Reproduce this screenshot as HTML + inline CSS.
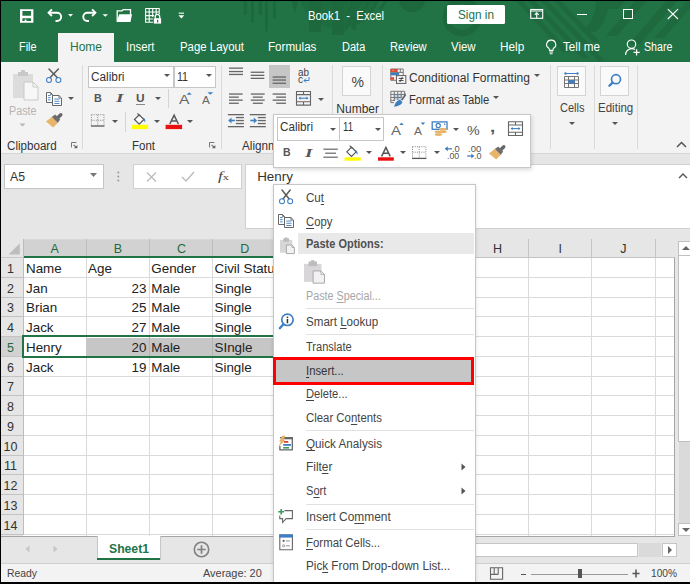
<!DOCTYPE html>
<html><head><meta charset="utf-8"><style>
html,body{margin:0;padding:0;}
body{width:690px;height:584px;overflow:hidden;position:relative;background:#fff;font-family:'Liberation Sans', sans-serif;}
body > div, body > svg, body > span {position:absolute;box-sizing:content-box;}

</style></head><body>
<div style="left:0px;top:0px;width:690px;height:584px;background:#e6e6e6;"></div>
<div style="left:0px;top:0px;width:690px;height:62px;background:#217346;"></div>
<svg style="left:1px;top:1px;" width="689" height="61" viewBox="1 1 689 61">
<g fill="#1e683e">
<rect x="243.7" y="0" width="3.1" height="14.8"/><rect x="251" y="0" width="3" height="22.6"/><rect x="258.5" y="0" width="3.5" height="14.8"/>
<rect x="265" y="0" width="3" height="31.3"/><rect x="273" y="0" width="3" height="19"/>
<path d="M291.5 0 H298.5 L295 13 Z"/>
<path d="M300 0 A 40 37 0 0 0 378 0 Z" opacity="0.55"/>
<rect x="309" y="0" width="12" height="32"/><rect x="332" y="0" width="11.7" height="35"/><rect x="351.5" y="0" width="5" height="30"/>
<path d="M345 0 h4 l-4 8z M352 0 h4 l-11 22 v-8z M360 0 h4 l-19 33 v-8z M368 0 h4 l-14 24 h-4z M376 0 h4 l-10 17 h-4z M384 0 h4 l-6 10 h-4z"/>
<path d="M399 0 A13 12 0 0 0 425 0 Z"/>
<path d="M462 -2.5 A19.5 19.5 0 1 0 462 36.5 A19.5 19.5 0 1 0 462 -2.5 Z M462 4 A13 13 0 1 1 462 30 A13 13 0 1 1 462 4 Z" fill-rule="evenodd"/>
<path d="M515 0 h7 l48 52 h-7z M527 0 h7 l55 58 h-7z M540 0 h7 l58 61 h-7z M553 0 h7 l40 42 h-7z" opacity="0.9"/>
<path d="M596 0 h14 Q606 24 596 32 h-14 Q596 20 596 0 Z" fill="#1e693e"/>
<path d="M636 0 h11 l-30 36 h-11z M667 0 h11 l-38 44 h-11z M688 0 h2 v8 l-26 30 h-10z" fill="#1e693e"/><path d="M612 0 h14 l-8 9 h-14z" fill="#1e693e"/>
</g></svg>
<svg style="left:18px;top:8px;" width="17" height="16" viewBox="18 8 17 16"><path d="M20 9.2 H33.4 V22.7 H20 Z M22.4 11 V15.7 H31.1 V11 Z M22.4 18.3 V21 H24.7 V19.6 H26.4 V21 H31.1 V18.3 Z" fill="#fff" fill-rule="evenodd"/></svg>
<svg style="left:45px;top:7px;" width="30" height="17" viewBox="45 7 30 17"><path d="M51.9 9.4 L48.6 12.7 L51.9 16" fill="none" stroke="#fff" stroke-width="1.9"/><path d="M49 12.7 H57 A4.15 4.15 0 0 1 57 21 H55.5" fill="none" stroke="#fff" stroke-width="1.9"/><path d="M68 14 H73 L70.5 16.7 Z" fill="#fff"/></svg>
<svg style="left:80px;top:7px;" width="30" height="17" viewBox="80 7 30 17"><path d="M92.1 9.4 L95.4 12.7 L92.1 16" fill="none" stroke="#fff" stroke-width="1.9"/><path d="M95 12.7 H87.4 A4.15 4.15 0 0 0 87.4 21 H89" fill="none" stroke="#fff" stroke-width="1.9"/><path d="M102.5 14.2 H108 L105.25 16.8 Z" fill="#fff"/></svg>
<svg style="left:115px;top:8px;" width="19" height="15" viewBox="115 8 19 15"><path d="M117.2 21.3 V10.8 H122 L123.2 9.6 H130.5 V14.5" fill="none" stroke="#fff" stroke-width="1.3"/><path d="M119.3 14.3 H132 L130.5 21.9 H116.5 Z" fill="#fff"/></svg>
<svg style="left:144px;top:7px;" width="19" height="18" viewBox="144 7 19 18"><g fill="none" stroke="#fff" stroke-width="1.1"><path d="M145.6 8.5 H159.2 V14 M145.6 8.5 V22.2 H153 M145.6 12 H159.2 M145.6 15.6 H154 M145.6 19 H153 M149.2 8.5 V22.2 M152.7 8.5 V17 M156.2 8.5 V14"/></g><rect x="153.8" y="18.2" width="7.3" height="5.4" fill="#fff"/><path d="M155.2 18.5 V16.6 A2.25 2.25 0 0 1 159.7 16.6 V18.5" fill="none" stroke="#fff" stroke-width="1.3"/><rect x="157" y="19.8" width="1.2" height="2.6" fill="#217346"/></svg>
<svg style="left:177px;top:11px;" width="8" height="9" viewBox="177 11 8 9"><rect x="178.7" y="12.6" width="5.3" height="1.1" fill="#fff"/><path d="M178.5 15.2 H184.2 L181.35 18.4 Z" fill="#fff"/></svg>
<span style="left:308.3px;top:10.42px;font-size:12.5px;line-height:12.5px;color:#fff;font-weight:400;white-space:nowrap;font-family:'Liberation Sans', sans-serif;transform:scaleX(0.904);transform-origin:0 0;">Book1&nbsp; -&nbsp; Excel</span>
<div style="left:446.5px;top:5px;width:58px;height:18.5px;background:#fff;border-radius:1.5px;"></div>
<span style="left:458px;top:8.92px;font-size:12.5px;line-height:12.5px;color:#217346;font-weight:400;white-space:nowrap;font-family:'Liberation Sans', sans-serif;transform:scaleX(0.942);transform-origin:0 0;">Sign in</span>
<svg style="left:529px;top:8px;" width="16" height="12" viewBox="529 8 16 12"><rect x="530.7" y="9.5" width="12" height="8.8" fill="none" stroke="#fff" stroke-width="1.1"/><path d="M530.7 11 H542.7" stroke="#fff" stroke-width="1"/><path d="M536.7 18.3 V12.8 M534.7 14.8 L536.7 12.8 L538.7 14.8" fill="none" stroke="#fff" stroke-width="1.1"/></svg>
<div style="left:577.4px;top:13.6px;width:9.8px;height:1.1px;background:#fff;"></div>
<div style="left:623px;top:9px;width:8px;height:8px;border:1.1px solid #fff;"></div>
<svg style="left:666px;top:8px;" width="14" height="12" viewBox="666 8 14 12"><path d="M667.8 9.2 L678 19 M678 9.2 L667.8 19" stroke="#fff" stroke-width="1.1"/></svg>
<div style="left:58px;top:32.5px;width:55.5px;height:30px;background:#f3f3f3;"></div>
<span style="left:18.5px;top:41.42px;font-size:12.5px;line-height:12.5px;color:#fff;font-weight:400;white-space:nowrap;font-family:'Liberation Sans', sans-serif;transform:scaleX(0.868);transform-origin:0 0;">File</span>
<span style="left:69.7px;top:41.42px;font-size:12.5px;line-height:12.5px;color:#217346;font-weight:400;white-space:nowrap;font-family:'Liberation Sans', sans-serif;transform:scaleX(0.960);transform-origin:0 0;">Home</span>
<span style="left:126px;top:41.22px;font-size:12.5px;line-height:12.5px;color:#fff;font-weight:400;white-space:nowrap;font-family:'Liberation Sans', sans-serif;transform:scaleX(0.912);transform-origin:0 0;">Insert</span>
<span style="left:180px;top:41.22px;font-size:12.5px;line-height:12.5px;color:#fff;font-weight:400;white-space:nowrap;font-family:'Liberation Sans', sans-serif;transform:scaleX(0.912);transform-origin:0 0;">Page Layout</span>
<span style="left:268.3px;top:41.22px;font-size:12.5px;line-height:12.5px;color:#fff;font-weight:400;white-space:nowrap;font-family:'Liberation Sans', sans-serif;transform:scaleX(0.929);transform-origin:0 0;">Formulas</span>
<span style="left:341.7px;top:41.22px;font-size:12.5px;line-height:12.5px;color:#fff;font-weight:400;white-space:nowrap;font-family:'Liberation Sans', sans-serif;transform:scaleX(0.882);transform-origin:0 0;">Data</span>
<span style="left:390px;top:41.22px;font-size:12.5px;line-height:12.5px;color:#fff;font-weight:400;white-space:nowrap;font-family:'Liberation Sans', sans-serif;transform:scaleX(0.895);transform-origin:0 0;">Review</span>
<span style="left:450.9px;top:41.22px;font-size:12.5px;line-height:12.5px;color:#fff;font-weight:400;white-space:nowrap;font-family:'Liberation Sans', sans-serif;transform:scaleX(0.915);transform-origin:0 0;">View</span>
<span style="left:499.8px;top:41.22px;font-size:12.5px;line-height:12.5px;color:#fff;font-weight:400;white-space:nowrap;font-family:'Liberation Sans', sans-serif;transform:scaleX(0.941);transform-origin:0 0;">Help</span>
<span style="left:563px;top:41.22px;font-size:12.5px;line-height:12.5px;color:#fff;font-weight:400;white-space:nowrap;font-family:'Liberation Sans', sans-serif;transform:scaleX(0.934);transform-origin:0 0;">Tell me</span>
<span style="left:643.6px;top:41.22px;font-size:12.5px;line-height:12.5px;color:#fff;font-weight:400;white-space:nowrap;font-family:'Liberation Sans', sans-serif;transform:scaleX(0.851);transform-origin:0 0;">Share</span>
<svg style="left:544px;top:37px;" width="14" height="19" viewBox="544 37 14 19"><path d="M551.2 40.1 a4.3 4.3 0 0 0 -2.6 7.9 c0.7 0.6 0.9 1.4 0.9 2.4 h3.4 c0 -1 0.2 -1.8 0.9 -2.4 a4.3 4.3 0 0 0 -2.6 -7.9 z" fill="none" stroke="#fff" stroke-width="1.1"/><path d="M549.3 52 h3.8 M549.8 53.8 h2.8" stroke="#fff" stroke-width="1.1"/></svg>
<svg style="left:623px;top:37px;" width="19" height="20" viewBox="623 37 19 20"><circle cx="631.5" cy="44.2" r="4.2" fill="none" stroke="#fff" stroke-width="1.2"/><path d="M625.6 55 a6.2 6.2 0 0 1 9.4 -5.4" fill="none" stroke="#fff" stroke-width="1.2"/><path d="M636.6 49.2 V55.4 M633.5 52.3 H639.7" stroke="#fff" stroke-width="1.2"/></svg>
<div style="left:1px;top:62px;width:689px;height:90.5px;background:#f3f3f3;"></div>
<div style="left:1px;top:152.8px;width:689px;height:1px;background:#d5d5d5;"></div>
<div style="left:82px;top:65px;width:1px;height:84px;background:#dadada;"></div>
<div style="left:220.5px;top:65px;width:1px;height:84px;background:#dadada;"></div>
<div style="left:332px;top:65px;width:1px;height:84px;background:#dadada;"></div>
<div style="left:382.4px;top:65px;width:1px;height:84px;background:#dadada;"></div>
<div style="left:550.4px;top:65px;width:1px;height:84px;background:#dadada;"></div>
<div style="left:593.6px;top:65px;width:1px;height:84px;background:#dadada;"></div>
<div style="left:637.2px;top:65px;width:1px;height:84px;background:#dadada;"></div>
<svg style="left:10px;top:69px;" width="30" height="32" viewBox="0 0 30 32"><path d="M3 5h20v24H3z" fill="#dcdcdc"/><path d="M8 3h10v4H8z" fill="#c8c8c8"/><rect x="11" y="1" width="4" height="3" rx="1" fill="#c8c8c8"/>
<path d="M14 13h9l5 5v13H14z" fill="#f7f7f7" stroke="#c9c9c9" stroke-width="1"/><path d="M23 13v5h5" fill="none" stroke="#c9c9c9"/></svg>
<span style="left:9.4px;top:104.92px;font-size:12.5px;line-height:12.5px;color:#b5b5b5;font-weight:400;white-space:nowrap;font-family:'Liberation Sans', sans-serif;transform:scaleX(0.860);transform-origin:0 0;">Paste</span>
<svg style="left:19px;top:123px;" width="7" height="4" viewBox="0 0 7 4"><path d="M0.5 0.5h6l-3 3z" fill="#b5b5b5"/></svg>
<svg style="left:45.2px;top:66.7px;" width="17.4" height="17" viewBox="45.2 66.7 17.4 17"><path d="M49.2 68.7 L57.4 77.2" stroke="#5a5a5a" stroke-width="1.5" stroke-linecap="round"/><path d="M58.6 68.7 L50.400000000000006 77.2" stroke="#5a5a5a" stroke-width="1.5" stroke-linecap="round"/><circle cx="49.2" cy="79.7" r="2.5" fill="none" stroke="#3f7fc1" stroke-width="1.05"/><circle cx="58.6" cy="79.7" r="2.5" fill="none" stroke="#3f7fc1" stroke-width="1.05"/></svg>
<svg style="left:45.3px;top:91px;" width="18" height="16" viewBox="45.3 91 18 16"><path d="M46.8 92.5 H50.8 L52.8 94.5 V102.5 H46.8 Z" fill="#fff" stroke="#666" stroke-width="1"/><path d="M50.8 92.5 V94.5 H52.8" fill="none" stroke="#666" stroke-width="0.8"/><rect x="48.3" y="95" width="2.6" height="0.9" fill="#3f7fc1"/><rect x="48.3" y="97.2" width="2.6" height="0.9" fill="#3f7fc1"/><rect x="48.3" y="99.4" width="2.6" height="0.9" fill="#3f7fc1"/><path d="M52.8 95.5 H59.199999999999996 L61.8 98.1 V105.5 H52.8 Z" fill="#fff" stroke="#666" stroke-width="1"/><path d="M59.199999999999996 95.5 V98.1 H61.8" fill="none" stroke="#666" stroke-width="0.8"/><rect x="54.599999999999994" y="98.6" width="5.2" height="0.9" fill="#3f7fc1"/><rect x="54.599999999999994" y="100.8" width="5.2" height="0.9" fill="#3f7fc1"/><rect x="54.599999999999994" y="103" width="5.2" height="0.9" fill="#3f7fc1"/></svg>
<svg style="left:68px;top:97px;" width="6" height="4" viewBox="0 0 6 4"><path d="M0 0h6l-3 3z" fill="#555"/></svg>
<svg style="left:44.3px;top:112px;" width="20" height="18" viewBox="44.3 112 20 18"><path d="M56.80 119.00 L61.10 114.70" stroke="#666" stroke-width="3.4" stroke-linecap="round"/><path d="M52.00 117.00 L55.50 114.50 L60.50 119.50 L58.00 123.00 Z" fill="#6e6e6e"/><path d="M46.30 121.50 L52.00 117.00 L58.00 123.00 L53.50 127.60 Z" fill="#e8b468"/></svg>
<span style="left:7.3px;top:140.24px;font-size:12px;line-height:12px;color:#333;font-weight:400;white-space:nowrap;font-family:'Liberation Sans', sans-serif;transform:scaleX(0.967);transform-origin:0 0;">Clipboard</span>
<svg style="left:70px;top:141.2px;" width="9" height="9" viewBox="70 141.2 9 9"><path d="M71.5 147.6 V142.7 H76.4" fill="none" stroke="#777" stroke-width="1"/><path d="M73.6 145.0 L76.5 147.79999999999998" stroke="#666" stroke-width="1.1"/><path d="M73.8 148.5 H77.4 V145.1 Z" fill="#666"/></svg>
<div style="left:87.5px;top:66px;width:84.5px;height:19.5px;border:1px solid #c6c6c6;background:#fff;"></div>
<div style="left:173.5px;top:66px;width:40px;height:19.5px;border:1px solid #c6c6c6;background:#fff;"></div>
<span style="left:90.5px;top:70.62px;font-size:12.5px;line-height:12.5px;color:#333;font-weight:400;white-space:nowrap;font-family:'Liberation Sans', sans-serif;transform:scaleX(0.945);transform-origin:0 0;">Calibri</span>
<svg style="left:164px;top:74px;" width="6" height="4" viewBox="0 0 6 4"><path d="M0 0h6l-3 3z" fill="#555"/></svg>
<span style="left:177px;top:70.62px;font-size:12.5px;line-height:12.5px;color:#333;font-weight:400;white-space:nowrap;font-family:'Liberation Sans', sans-serif;transform:scaleX(0.847);transform-origin:0 0;">11</span>
<svg style="left:206px;top:74px;" width="6" height="4" viewBox="0 0 6 4"><path d="M0 0h6l-3 3z" fill="#555"/></svg>
<span style="left:93.6px;top:93.07px;font-size:11.5px;line-height:11.5px;color:#555;font-weight:700;white-space:nowrap;font-family:'Liberation Sans', sans-serif;transform:scaleX(0.938);transform-origin:0 0;">B</span>
<span style="left:115.5px;top:92.22px;font-size:12.5px;line-height:12.5px;color:#555;font-weight:700;white-space:nowrap;font-family:'Liberation Serif', serif;font-style:italic;transform:scaleX(1.538);transform-origin:0 0;">I</span>
<span style="left:136px;top:93.07px;font-size:11.5px;line-height:11.5px;color:#555;font-weight:700;white-space:nowrap;font-family:'Liberation Sans', sans-serif;transform:scaleX(1.035);transform-origin:0 0;">U</span>
<div style="left:136px;top:104px;width:8.6px;height:1px;background:#888;"></div>
<svg style="left:155px;top:97px;" width="6" height="4" viewBox="0 0 6 4"><path d="M0 0h6l-3 3z" fill="#555"/></svg>
<div style="left:168px;top:89px;width:1px;height:19px;background:#d4d4d4;"></div>
<span style="left:178.6px;top:92.97px;font-size:13.5px;line-height:13.5px;color:#666;font-weight:400;white-space:nowrap;font-family:'Liberation Sans', sans-serif;transform:scaleX(1.154);transform-origin:0 0;">A</span>
<svg style="left:185px;top:91px;" width="8" height="5" viewBox="185 91 8 5"><path d="M186.6 94.7 H191.8 L189.2 92.2 Z" fill="#3f7fc1"/></svg>
<span style="left:201.5px;top:95.94px;font-size:10px;line-height:10px;color:#666;font-weight:400;white-space:nowrap;font-family:'Liberation Sans', sans-serif;transform:scaleX(1.169);transform-origin:0 0;">A</span>
<svg style="left:206px;top:91px;" width="8" height="5" viewBox="206 91 8 5"><path d="M207.4 92.2 H213.2 L210.3 94.7 Z" fill="#3f7fc1"/></svg>
<svg style="left:89px;top:112px;" width="17" height="16" viewBox="89 112 17 16"><path d="M91.4 114.7 H104 M91.4 120.3 H104 M91.4 114.7 V125.5 M97.7 114.7 V125.5 M104 114.7 V125.5" stroke="#8a8a8a" stroke-width="0.9" stroke-dasharray="1.1 1.1"/><path d="M90.9 126 H104.5" stroke="#555" stroke-width="1.3"/></svg>
<svg style="left:111.5px;top:120px;" width="6" height="4" viewBox="0 0 6 4"><path d="M0 0h6l-3 3z" fill="#555"/></svg>
<div style="left:124.7px;top:111.5px;width:1px;height:20px;background:#d4d4d4;"></div>
<svg style="left:131px;top:111px;" width="19" height="19" viewBox="131 111 19 19"><path d="M134.5 119.5 L139.2 114.8 L143.9 119.5 L139.2 124.2 Z" fill="#fff" stroke="#555" stroke-width="1.2"/><path d="M137.4 113.4 L140 116.2" stroke="#555" stroke-width="1.1"/><path d="M143.2 117.6 C145.3 118.6 145.8 120.8 145 122.5 C144 121 143.6 119.5 143.2 117.6 Z" fill="#3f7fc1"/><rect x="132" y="124.8" width="16.2" height="4.3" fill="#ffff00"/></svg>
<svg style="left:154px;top:120px;" width="6" height="4" viewBox="0 0 6 4"><path d="M0 0h6l-3 3z" fill="#555"/></svg>
<svg style="left:164px;top:111px;" width="20" height="19" viewBox="164 111 20 19"><path d="M169.8 124 L174.1 115.2 L178.4 124 M171.3 121 H176.9" fill="none" stroke="#555" stroke-width="1.5"/><rect x="165.6" y="124.8" width="16.5" height="4.3" fill="#e81010"/></svg>
<svg style="left:187px;top:120px;" width="6" height="4" viewBox="0 0 6 4"><path d="M0 0h6l-3 3z" fill="#555"/></svg>
<span style="left:131.5px;top:140.24px;font-size:12px;line-height:12px;color:#333;font-weight:400;white-space:nowrap;font-family:'Liberation Sans', sans-serif;transform:scaleX(0.958);transform-origin:0 0;">Font</span>
<svg style="left:208.4px;top:141.2px;" width="9" height="9" viewBox="208.4 141.2 9 9"><path d="M209.9 147.6 V142.7 H214.8" fill="none" stroke="#777" stroke-width="1"/><path d="M212.0 145.0 L214.9 147.79999999999998" stroke="#666" stroke-width="1.1"/><path d="M212.20000000000002 148.5 H215.8 V145.1 Z" fill="#666"/></svg>
<svg style="left:226px;top:65px;" width="64" height="22" viewBox="226 65 64 22"><rect x="229" y="67.5" width="14" height="1.3" fill="#666"/><rect x="229" y="70.9" width="14" height="1.3" fill="#666"/><rect x="229" y="73.8" width="14" height="1.3" fill="#666"/><rect x="250.7" y="71.6" width="13.6" height="1.3" fill="#666"/><rect x="250.7" y="74.7" width="13.6" height="1.3" fill="#666"/><rect x="250.7" y="77.7" width="13.6" height="1.3" fill="#666"/></svg>
<div style="left:268.5px;top:65px;width:21.5px;height:22.5px;background:#c6c6c6;"></div>
<svg style="left:270px;top:74px;" width="20" height="12" viewBox="270 74 20 12"><rect x="272.6" y="76.4" width="13.4" height="1.3" fill="#666"/><rect x="272.6" y="79.4" width="13.4" height="1.3" fill="#666"/><rect x="272.6" y="82.6" width="13.4" height="1.3" fill="#666"/></svg>
<span style="left:297.5px;top:66.69px;font-size:11px;line-height:11px;color:#444;font-weight:400;white-space:nowrap;font-family:'Liberation Sans', sans-serif;transform:scaleX(0.898);transform-origin:0 0;">ab</span>
<span style="left:297.5px;top:74.19px;font-size:11px;line-height:11px;color:#444;font-weight:400;white-space:nowrap;font-family:'Liberation Sans', sans-serif;transform:scaleX(0.909);transform-origin:0 0;">c</span>
<svg style="left:303px;top:77px;" width="7" height="6" viewBox="0 0 7 6"><path d="M6 0v3.5H1M3 1.5l-2 2 2 2" fill="none" stroke="#3c7fc4" stroke-width="1"/></svg>
<svg style="left:226px;top:90px;" width="64" height="16" viewBox="226 90 64 16"><rect x="229" y="93.4" width="13.7" height="1.3" fill="#666"/><rect x="229" y="96.5" width="9.8" height="1.3" fill="#666"/><rect x="229" y="99.5" width="13.7" height="1.3" fill="#666"/><rect x="229" y="102.6" width="9.8" height="1.3" fill="#666"/><rect x="250.8" y="93.4" width="13.9" height="1.3" fill="#666"/><rect x="252.8" y="96.5" width="10" height="1.3" fill="#666"/><rect x="250.8" y="99.5" width="13.9" height="1.3" fill="#666"/><rect x="252.8" y="102.6" width="10" height="1.3" fill="#666"/><rect x="272.6" y="93.4" width="13.4" height="1.3" fill="#666"/><rect x="276.2" y="96.5" width="9.8" height="1.3" fill="#666"/><rect x="272.6" y="99.5" width="13.4" height="1.3" fill="#666"/><rect x="276.2" y="102.6" width="9.8" height="1.3" fill="#666"/></svg>
<svg style="left:294px;top:89px;" width="19" height="19" viewBox="294 89 19 19"><path d="M296.5 91.5 H310.5 V105.1 H296.5 Z M296.5 94.6 H310.5 M296.5 101.7 H310.5 M303.5 91.5 V94.6 M303.5 101.7 V105.1" fill="none" stroke="#666" stroke-width="1.1"/><path d="M299.2 98.2 H307.8" stroke="#3f7fc1" stroke-width="1.1"/><path d="M298.6 98.2 L300.6 96.6 V99.8 Z M308.4 98.2 L306.4 96.6 V99.8 Z" fill="#3f7fc1"/></svg>
<svg style="left:318px;top:98px;" width="6" height="4" viewBox="0 0 6 4"><path d="M0 0h6l-3 3z" fill="#555"/></svg>
<svg style="left:226px;top:112px;" width="42" height="17" viewBox="226 112 42 17"><rect x="227.9" y="114" width="16" height="1.3" fill="#666"/><rect x="235.9" y="116.9" width="8" height="1.3" fill="#666"/><rect x="235.9" y="119.9" width="8" height="1.3" fill="#666"/><rect x="235.9" y="122.9" width="8" height="1.3" fill="#666"/><rect x="227.9" y="126" width="16" height="1.3" fill="#666"/><path d="M234.9 120.5 H229.9" stroke="#3f7fc1" stroke-width="1.6"/><path d="M228.20000000000002 120.5 L231.5 117.6 V123.4 Z" fill="#3f7fc1"/><rect x="249.8" y="114" width="16" height="1.3" fill="#666"/><rect x="257.8" y="116.9" width="8" height="1.3" fill="#666"/><rect x="257.8" y="119.9" width="8" height="1.3" fill="#666"/><rect x="257.8" y="122.9" width="8" height="1.3" fill="#666"/><rect x="249.8" y="126" width="16" height="1.3" fill="#666"/><path d="M250.3 120.5 H254.8" stroke="#3f7fc1" stroke-width="1.6"/><path d="M257.1 120.5 L253.8 117.6 V123.4 Z" fill="#3f7fc1"/></svg>
<span style="left:242.2px;top:140.24px;font-size:12px;line-height:12px;color:#333;font-weight:400;white-space:nowrap;font-family:'Liberation Sans', sans-serif;transform:scaleX(0.974);transform-origin:0 0;">Alignment</span>
<div style="left:341.5px;top:66px;width:27.5px;height:28px;border:1px solid #d4d4d4;background:#fafafa;"></div>
<span style="left:351.5px;top:75.15px;font-size:14px;line-height:14px;color:#444;font-weight:400;white-space:nowrap;font-family:'Liberation Sans', sans-serif;">%</span>
<span style="left:336.3px;top:102.54px;font-size:12px;line-height:12px;color:#333;font-weight:400;white-space:nowrap;font-family:'Liberation Sans', sans-serif;">Number</span>
<svg style="left:388px;top:67px;" width="20" height="18" viewBox="388 67 20 18"><path d="M390.8 69 H403.2 V75.5 M390.8 69 V80.3 H396 M390.8 72.4 H403.2 M397.2 69 V75 M400.3 69 V72.4" fill="none" stroke="#777" stroke-width="1"/><rect x="390.5" y="69" width="6.6" height="3" fill="#e04a3a"/><circle cx="393" cy="70.4" r="0.7" fill="#f0c040"/><rect x="390.5" y="72.8" width="8.6" height="2.5" fill="#3f7fc1"/><rect x="390.5" y="77.2" width="3.6" height="2.6" fill="#e04a3a"/><rect x="396.5" y="75.6" width="9.3" height="7.8" fill="#fff" stroke="#666" stroke-width="1.1"/><path d="M398.7 78.4 H403.6 M398.7 80.6 H403.6 M402.4 77 L399.8 82" stroke="#333" stroke-width="0.9"/></svg>
<span style="left:409.3px;top:72.42px;font-size:12.5px;line-height:12.5px;color:#333;font-weight:400;white-space:nowrap;font-family:'Liberation Sans', sans-serif;transform:scaleX(0.962);transform-origin:0 0;">Conditional Formatting</span>
<svg style="left:534px;top:74px;" width="6" height="4" viewBox="0 0 6 4"><path d="M0 0h6l-3 3z" fill="#555"/></svg>
<svg style="left:388px;top:90px;" width="20" height="18" viewBox="388 90 20 18"><rect x="393.5" y="94" width="9" height="6" fill="#bcd6ee"/><path d="M390.8 91.3 H404.6 V95 M390.8 91.3 V102.6 H394 M390.8 94.4 H404.6 M390.8 97.5 H401 M390.8 100.4 H395 M394.3 91.3 V101 M397.8 91.3 V100 M401.2 91.3 V98" fill="none" stroke="#777" stroke-width="1"/><path d="M405.5 93 L401 99.5 L402.3 100.8 L406 95.5 Z" fill="#666"/><path d="M400.5 100 C398 99.5 395.5 101.5 394 106.8 C398 106 401.5 105 402.4 102.2 Z" fill="#3f7fc1"/></svg>
<span style="left:409.3px;top:93.82px;font-size:12.5px;line-height:12.5px;color:#333;font-weight:400;white-space:nowrap;font-family:'Liberation Sans', sans-serif;transform:scaleX(0.898);transform-origin:0 0;">Format as Table</span>
<svg style="left:493px;top:96px;" width="6" height="4" viewBox="0 0 6 4"><path d="M0 0h6l-3 3z" fill="#555"/></svg>
<div style="left:557px;top:66px;width:27px;height:27.5px;border:1px solid #d4d4d4;background:#fafafa;"></div>
<svg style="left:563px;top:72px;" width="17" height="17" viewBox="0 0 17 17"><path d="M2.5 1.5h12" stroke="#3c7fc4" stroke-width="1"/><circle cx="2.5" cy="1.5" r="1.2" fill="#3c7fc4"/><circle cx="14.5" cy="1.5" r="1.2" fill="#3c7fc4"/><path d="M1.5 4.5h14v11h-14zM1.5 8h14M1.5 11.5h14M5.5 4.5v11M11.5 4.5v11" fill="none" stroke="#666" stroke-width="0.9"/><rect x="5.5" y="8" width="6" height="3.5" fill="#3c7fc4"/></svg>
<span style="left:560px;top:102.32px;font-size:12.5px;line-height:12.5px;color:#444;font-weight:400;white-space:nowrap;font-family:'Liberation Sans', sans-serif;transform:scaleX(0.881);transform-origin:0 0;">Cells</span>
<svg style="left:569px;top:122px;" width="6" height="4" viewBox="0 0 6 4"><path d="M0 0h6l-3 3z" fill="#555"/></svg>
<div style="left:600.3px;top:66px;width:27.2px;height:27.5px;border:1px solid #d4d4d4;background:#fafafa;"></div>
<svg style="left:606px;top:71px;" width="20" height="18" viewBox="606 71 20 18"><circle cx="616" cy="79.2" r="4.5" fill="none" stroke="#3f7fc1" stroke-width="1.7"/><path d="M612.6 82.6 L609.4 85.8" stroke="#3f7fc1" stroke-width="2.3" stroke-linecap="round"/></svg>
<span style="left:597.7px;top:102.32px;font-size:12.5px;line-height:12.5px;color:#444;font-weight:400;white-space:nowrap;font-family:'Liberation Sans', sans-serif;transform:scaleX(0.923);transform-origin:0 0;">Editing</span>
<svg style="left:611.5px;top:122px;" width="6" height="4" viewBox="0 0 6 4"><path d="M0 0h6l-3 3z" fill="#555"/></svg>
<svg style="left:676px;top:141px;" width="11" height="7" viewBox="0 0 11 7"><path d="M1 6l4.5-4.5L10 6" fill="none" stroke="#555" stroke-width="1.5"/></svg>
<div style="left:3.5px;top:164px;width:98px;height:23px;border:1px solid #c6c6c6;background:#fff;"></div>
<span style="left:10.4px;top:170.62px;font-size:12.5px;line-height:12.5px;color:#333;font-weight:400;white-space:nowrap;font-family:'Liberation Sans', sans-serif;transform:scaleX(0.981);transform-origin:0 0;">A5</span>
<svg style="left:90px;top:173px;" width="7" height="5" viewBox="0 0 7 5"><path d="M0 0h7l-3.5 4z" fill="#777"/></svg>
<svg style="left:115px;top:170px;" width="7" height="13" viewBox="115 170 7 13"><circle cx="118.3" cy="172.6" r="1" fill="#9a9a9a"/><circle cx="118.3" cy="176.6" r="1" fill="#9a9a9a"/><circle cx="118.3" cy="180.6" r="1" fill="#9a9a9a"/></svg>
<div style="left:133px;top:164px;width:106.5px;height:23px;border:1px solid #d0d0d0;background:#fff;"></div>
<svg style="left:146px;top:172px;" width="12" height="10" viewBox="0 0 12 10"><path d="M1 0.5l9 9M10 0.5l-9 9" stroke="#bbb" stroke-width="1.2"/></svg>
<svg style="left:181px;top:171px;" width="14" height="11" viewBox="0 0 14 11"><path d="M1 6l4 4L13 1" fill="none" stroke="#bbb" stroke-width="1.4"/></svg>
<span style="left:218px;top:170.42px;font-size:12.5px;line-height:12.5px;color:#444;font-weight:400;white-space:nowrap;font-family:'Liberation Serif', serif;transform:scaleX(1.378);transform-origin:0 0;"><i>f</i><span style="font-size:9px">x</span></span>
<div style="left:245px;top:164px;width:448px;height:62.5px;border:1px solid #d0d0d0;background:#fff;"></div>
<span style="left:257.2px;top:169.96px;font-size:13.4px;line-height:13.4px;color:#333;font-weight:400;white-space:nowrap;font-family:'Liberation Sans', sans-serif;">Henry</span>
<svg style="left:678px;top:172px;" width="10" height="7" viewBox="0 0 10 7"><path d="M1 6l4-4 4 4" fill="none" stroke="#555" stroke-width="1.4"/></svg>
<div style="left:1px;top:239px;width:674px;height:18.5px;background:#e6e6e6;"></div>
<div style="left:23px;top:239px;width:253px;height:17px;background:#d2d2d2;"></div>
<div style="left:23px;top:238.5px;width:253px;height:1px;background:#d8d8d8;"></div>
<svg style="left:7px;top:242px;" width="14" height="14" viewBox="7 242 14 14"><path d="M19.8 243.2 V254.5 H8.6 Z" fill="#bdbdbd"/></svg>
<div style="left:85.7px;top:239px;width:1px;height:18px;background:#bcbcbc;"></div>
<div style="left:148.9px;top:239px;width:1px;height:18px;background:#bcbcbc;"></div>
<div style="left:212.10000000000002px;top:239px;width:1px;height:18px;background:#bcbcbc;"></div>
<div style="left:275.3px;top:239px;width:1px;height:18px;background:#bcbcbc;"></div>
<div style="left:338.5px;top:239px;width:1px;height:18px;background:#c4c4c4;"></div>
<div style="left:401.70000000000005px;top:239px;width:1px;height:18px;background:#c4c4c4;"></div>
<div style="left:464.90000000000003px;top:239px;width:1px;height:18px;background:#c4c4c4;"></div>
<div style="left:528.1px;top:239px;width:1px;height:18px;background:#c4c4c4;"></div>
<div style="left:591.3000000000001px;top:239px;width:1px;height:18px;background:#c4c4c4;"></div>
<div style="left:654.5px;top:239px;width:1px;height:18px;background:#c4c4c4;"></div>
<div style="left:23px;top:256px;width:253px;height:2px;background:#217346;"></div>
<span style="left:50.6px;top:242.92px;font-size:12.5px;line-height:12.5px;color:#1e6b3e;font-weight:400;white-space:nowrap;font-family:'Liberation Sans', sans-serif;width:8px;text-align:center;">A</span>
<span style="left:113.80000000000001px;top:242.92px;font-size:12.5px;line-height:12.5px;color:#1e6b3e;font-weight:400;white-space:nowrap;font-family:'Liberation Sans', sans-serif;width:8px;text-align:center;">B</span>
<span style="left:177.0px;top:242.92px;font-size:12.5px;line-height:12.5px;color:#1e6b3e;font-weight:400;white-space:nowrap;font-family:'Liberation Sans', sans-serif;width:8px;text-align:center;">C</span>
<span style="left:240.20000000000002px;top:242.92px;font-size:12.5px;line-height:12.5px;color:#1e6b3e;font-weight:400;white-space:nowrap;font-family:'Liberation Sans', sans-serif;width:8px;text-align:center;">D</span>
<span style="left:303.40000000000003px;top:242.92px;font-size:12.5px;line-height:12.5px;color:#333;font-weight:400;white-space:nowrap;font-family:'Liberation Sans', sans-serif;width:8px;text-align:center;">E</span>
<span style="left:366.6px;top:242.92px;font-size:12.5px;line-height:12.5px;color:#333;font-weight:400;white-space:nowrap;font-family:'Liberation Sans', sans-serif;width:8px;text-align:center;">F</span>
<span style="left:429.80000000000007px;top:242.92px;font-size:12.5px;line-height:12.5px;color:#333;font-weight:400;white-space:nowrap;font-family:'Liberation Sans', sans-serif;width:8px;text-align:center;">G</span>
<span style="left:493.00000000000006px;top:242.92px;font-size:12.5px;line-height:12.5px;color:#333;font-weight:400;white-space:nowrap;font-family:'Liberation Sans', sans-serif;width:8px;text-align:center;">H</span>
<span style="left:556.2px;top:242.92px;font-size:12.5px;line-height:12.5px;color:#333;font-weight:400;white-space:nowrap;font-family:'Liberation Sans', sans-serif;width:8px;text-align:center;">I</span>
<span style="left:619.4000000000001px;top:242.92px;font-size:12.5px;line-height:12.5px;color:#333;font-weight:400;white-space:nowrap;font-family:'Liberation Sans', sans-serif;width:8px;text-align:center;">J</span>
<div style="left:23px;top:257.5px;width:651.5px;height:278px;background:#fff;"></div>
<div style="left:1px;top:257.5px;width:22px;height:278px;background:#e6e6e6;"></div>
<div style="left:1px;top:336.5px;width:22px;height:19.75px;background:#d2d2d2;"></div>
<div style="left:23px;top:276.75px;width:651.5px;height:1px;background:#dadada;"></div>
<div style="left:1px;top:276.75px;width:22px;height:1px;background:#c3c3c3;"></div>
<div style="left:23px;top:296.5px;width:651.5px;height:1px;background:#dadada;"></div>
<div style="left:1px;top:296.5px;width:22px;height:1px;background:#c3c3c3;"></div>
<div style="left:23px;top:316.25px;width:651.5px;height:1px;background:#dadada;"></div>
<div style="left:1px;top:316.25px;width:22px;height:1px;background:#c3c3c3;"></div>
<div style="left:23px;top:336.0px;width:651.5px;height:1px;background:#dadada;"></div>
<div style="left:1px;top:336.0px;width:22px;height:1px;background:#c3c3c3;"></div>
<div style="left:23px;top:355.75px;width:651.5px;height:1px;background:#dadada;"></div>
<div style="left:1px;top:355.75px;width:22px;height:1px;background:#c3c3c3;"></div>
<div style="left:23px;top:375.5px;width:651.5px;height:1px;background:#dadada;"></div>
<div style="left:1px;top:375.5px;width:22px;height:1px;background:#c3c3c3;"></div>
<div style="left:23px;top:395.25px;width:651.5px;height:1px;background:#dadada;"></div>
<div style="left:1px;top:395.25px;width:22px;height:1px;background:#c3c3c3;"></div>
<div style="left:23px;top:415.0px;width:651.5px;height:1px;background:#dadada;"></div>
<div style="left:1px;top:415.0px;width:22px;height:1px;background:#c3c3c3;"></div>
<div style="left:23px;top:434.75px;width:651.5px;height:1px;background:#dadada;"></div>
<div style="left:1px;top:434.75px;width:22px;height:1px;background:#c3c3c3;"></div>
<div style="left:23px;top:454.5px;width:651.5px;height:1px;background:#dadada;"></div>
<div style="left:1px;top:454.5px;width:22px;height:1px;background:#c3c3c3;"></div>
<div style="left:23px;top:474.25px;width:651.5px;height:1px;background:#dadada;"></div>
<div style="left:1px;top:474.25px;width:22px;height:1px;background:#c3c3c3;"></div>
<div style="left:23px;top:494.0px;width:651.5px;height:1px;background:#dadada;"></div>
<div style="left:1px;top:494.0px;width:22px;height:1px;background:#c3c3c3;"></div>
<div style="left:23px;top:513.75px;width:651.5px;height:1px;background:#dadada;"></div>
<div style="left:1px;top:513.75px;width:22px;height:1px;background:#c3c3c3;"></div>
<div style="left:23px;top:533.5px;width:651.5px;height:1px;background:#dadada;"></div>
<div style="left:1px;top:533.5px;width:22px;height:1px;background:#c3c3c3;"></div>
<div style="left:85.7px;top:257.5px;width:1px;height:278px;background:#dadada;"></div>
<div style="left:148.9px;top:257.5px;width:1px;height:278px;background:#dadada;"></div>
<div style="left:212.10000000000002px;top:257.5px;width:1px;height:278px;background:#dadada;"></div>
<div style="left:275.3px;top:257.5px;width:1px;height:278px;background:#dadada;"></div>
<div style="left:338.5px;top:257.5px;width:1px;height:278px;background:#dadada;"></div>
<div style="left:401.70000000000005px;top:257.5px;width:1px;height:278px;background:#dadada;"></div>
<div style="left:464.90000000000003px;top:257.5px;width:1px;height:278px;background:#dadada;"></div>
<div style="left:528.1px;top:257.5px;width:1px;height:278px;background:#dadada;"></div>
<div style="left:591.3000000000001px;top:257.5px;width:1px;height:278px;background:#dadada;"></div>
<div style="left:654.5px;top:257.5px;width:1px;height:278px;background:#dadada;"></div>
<div style="left:22.5px;top:239px;width:1px;height:296px;background:#bcbcbc;"></div>
<div style="left:276px;top:256.6px;width:398.5px;height:1.2px;background:#c3c3c3;"></div>
<div style="left:1px;top:257.2px;width:22px;height:1.2px;background:#c8c8c8;"></div>
<div style="left:674.3px;top:257.5px;width:1px;height:279px;background:#a5a5a5;"></div>
<div style="left:1px;top:536px;width:674.3px;height:1px;background:#a5a5a5;"></div>
<span style="left:0px;top:262.92px;font-size:12.5px;line-height:12.5px;color:#333;font-weight:400;white-space:nowrap;font-family:'Liberation Sans', sans-serif;width:21px;text-align:center;">1</span>
<span style="left:0px;top:282.67px;font-size:12.5px;line-height:12.5px;color:#333;font-weight:400;white-space:nowrap;font-family:'Liberation Sans', sans-serif;width:21px;text-align:center;">2</span>
<span style="left:0px;top:302.42px;font-size:12.5px;line-height:12.5px;color:#333;font-weight:400;white-space:nowrap;font-family:'Liberation Sans', sans-serif;width:21px;text-align:center;">3</span>
<span style="left:0px;top:322.17px;font-size:12.5px;line-height:12.5px;color:#333;font-weight:400;white-space:nowrap;font-family:'Liberation Sans', sans-serif;width:21px;text-align:center;">4</span>
<span style="left:0px;top:341.92px;font-size:12.5px;line-height:12.5px;color:#1e6b3e;font-weight:400;white-space:nowrap;font-family:'Liberation Sans', sans-serif;width:21px;text-align:center;">5</span>
<span style="left:0px;top:361.67px;font-size:12.5px;line-height:12.5px;color:#333;font-weight:400;white-space:nowrap;font-family:'Liberation Sans', sans-serif;width:21px;text-align:center;">6</span>
<span style="left:0px;top:381.42px;font-size:12.5px;line-height:12.5px;color:#333;font-weight:400;white-space:nowrap;font-family:'Liberation Sans', sans-serif;width:21px;text-align:center;">7</span>
<span style="left:0px;top:401.17px;font-size:12.5px;line-height:12.5px;color:#333;font-weight:400;white-space:nowrap;font-family:'Liberation Sans', sans-serif;width:21px;text-align:center;">8</span>
<span style="left:0px;top:420.92px;font-size:12.5px;line-height:12.5px;color:#333;font-weight:400;white-space:nowrap;font-family:'Liberation Sans', sans-serif;width:21px;text-align:center;">9</span>
<span style="left:0px;top:440.67px;font-size:12.5px;line-height:12.5px;color:#333;font-weight:400;white-space:nowrap;font-family:'Liberation Sans', sans-serif;width:21px;text-align:center;">10</span>
<span style="left:0px;top:460.42px;font-size:12.5px;line-height:12.5px;color:#333;font-weight:400;white-space:nowrap;font-family:'Liberation Sans', sans-serif;width:21px;text-align:center;">11</span>
<span style="left:0px;top:480.17px;font-size:12.5px;line-height:12.5px;color:#333;font-weight:400;white-space:nowrap;font-family:'Liberation Sans', sans-serif;width:21px;text-align:center;">12</span>
<span style="left:0px;top:499.92px;font-size:12.5px;line-height:12.5px;color:#333;font-weight:400;white-space:nowrap;font-family:'Liberation Sans', sans-serif;width:21px;text-align:center;">13</span>
<span style="left:0px;top:519.67px;font-size:12.5px;line-height:12.5px;color:#333;font-weight:400;white-space:nowrap;font-family:'Liberation Sans', sans-serif;width:21px;text-align:center;">14</span>
<div style="left:86.2px;top:337.5px;width:200px;height:19px;background:#c6c6c6;"></div>
<div style="left:21.8px;top:335.0px;width:298px;height:20.5px;border:1px solid #217346;background:none;border-width:2px;width:296px;height:18.5px;"></div>
<div style="left:23.8px;top:337.0px;width:61.900000000000006px;height:18.5px;background:#fff;"></div>
<div style="left:148.9px;top:337.0px;width:1px;height:19px;background:#b4b4b4;"></div>
<div style="left:212.10000000000002px;top:337.0px;width:1px;height:19px;background:#b4b4b4;"></div>
<div style="left:275.3px;top:337.0px;width:1px;height:19px;background:#b4b4b4;"></div>
<span style="left:26.0px;top:261.96px;font-size:13.4px;line-height:13.4px;color:#222;font-weight:400;white-space:nowrap;font-family:'Liberation Sans', sans-serif;">Name</span>
<span style="left:88.10000000000001px;top:261.96px;font-size:13.4px;line-height:13.4px;color:#222;font-weight:400;white-space:nowrap;font-family:'Liberation Sans', sans-serif;">Age</span>
<span style="left:151.3px;top:261.96px;font-size:13.4px;line-height:13.4px;color:#222;font-weight:400;white-space:nowrap;font-family:'Liberation Sans', sans-serif;">Gender</span>
<span style="left:214.50000000000003px;top:261.96px;font-size:13.4px;line-height:13.4px;color:#222;font-weight:400;white-space:nowrap;font-family:'Liberation Sans', sans-serif;">Civil Status</span>
<span style="left:26.0px;top:281.71px;font-size:13.4px;line-height:13.4px;color:#222;font-weight:400;white-space:nowrap;font-family:'Liberation Sans', sans-serif;">Jan</span>
<span style="left:86.2px;top:281.71px;width:60.2px;text-align:right;font-size:13.4px;line-height:13.4px;color:#222;white-space:nowrap;">23</span>
<span style="left:151.3px;top:281.71px;font-size:13.4px;line-height:13.4px;color:#222;font-weight:400;white-space:nowrap;font-family:'Liberation Sans', sans-serif;">Male</span>
<span style="left:214.50000000000003px;top:281.71px;font-size:13.4px;line-height:13.4px;color:#222;font-weight:400;white-space:nowrap;font-family:'Liberation Sans', sans-serif;">Single</span>
<span style="left:26.0px;top:301.46px;font-size:13.4px;line-height:13.4px;color:#222;font-weight:400;white-space:nowrap;font-family:'Liberation Sans', sans-serif;">Brian</span>
<span style="left:86.2px;top:301.46px;width:60.2px;text-align:right;font-size:13.4px;line-height:13.4px;color:#222;white-space:nowrap;">25</span>
<span style="left:151.3px;top:301.46px;font-size:13.4px;line-height:13.4px;color:#222;font-weight:400;white-space:nowrap;font-family:'Liberation Sans', sans-serif;">Male</span>
<span style="left:214.50000000000003px;top:301.46px;font-size:13.4px;line-height:13.4px;color:#222;font-weight:400;white-space:nowrap;font-family:'Liberation Sans', sans-serif;">Single</span>
<span style="left:26.0px;top:321.21px;font-size:13.4px;line-height:13.4px;color:#222;font-weight:400;white-space:nowrap;font-family:'Liberation Sans', sans-serif;">Jack</span>
<span style="left:86.2px;top:321.21px;width:60.2px;text-align:right;font-size:13.4px;line-height:13.4px;color:#222;white-space:nowrap;">27</span>
<span style="left:151.3px;top:321.21px;font-size:13.4px;line-height:13.4px;color:#222;font-weight:400;white-space:nowrap;font-family:'Liberation Sans', sans-serif;">Male</span>
<span style="left:214.50000000000003px;top:321.21px;font-size:13.4px;line-height:13.4px;color:#222;font-weight:400;white-space:nowrap;font-family:'Liberation Sans', sans-serif;">Single</span>
<span style="left:26.0px;top:340.96px;font-size:13.4px;line-height:13.4px;color:#222;font-weight:400;white-space:nowrap;font-family:'Liberation Sans', sans-serif;">Henry</span>
<span style="left:86.2px;top:340.96px;width:60.2px;text-align:right;font-size:13.4px;line-height:13.4px;color:#222;white-space:nowrap;">20</span>
<span style="left:151.3px;top:340.96px;font-size:13.4px;line-height:13.4px;color:#222;font-weight:400;white-space:nowrap;font-family:'Liberation Sans', sans-serif;">Male</span>
<span style="left:214.50000000000003px;top:340.96px;font-size:13.4px;line-height:13.4px;color:#222;font-weight:400;white-space:nowrap;font-family:'Liberation Sans', sans-serif;">SIngle</span>
<span style="left:26.0px;top:360.71px;font-size:13.4px;line-height:13.4px;color:#222;font-weight:400;white-space:nowrap;font-family:'Liberation Sans', sans-serif;">Jack</span>
<span style="left:86.2px;top:360.71px;width:60.2px;text-align:right;font-size:13.4px;line-height:13.4px;color:#222;white-space:nowrap;">19</span>
<span style="left:151.3px;top:360.71px;font-size:13.4px;line-height:13.4px;color:#222;font-weight:400;white-space:nowrap;font-family:'Liberation Sans', sans-serif;">Male</span>
<span style="left:214.50000000000003px;top:360.71px;font-size:13.4px;line-height:13.4px;color:#222;font-weight:400;white-space:nowrap;font-family:'Liberation Sans', sans-serif;">Single</span>
<div style="left:675.5px;top:239px;width:15px;height:297px;background:#e6e6e6;"></div>
<div style="left:678.5px;top:256px;width:12px;height:267px;background:#dadada;"></div>
<div style="left:678px;top:241px;width:12px;height:13px;border:1px solid #c0c0c0;background:#fff;"></div>
<svg style="left:682px;top:245px;" width="8" height="6" viewBox="0 0 8 6"><path d="M0 5h8L4 1z" fill="#666"/></svg>
<div style="left:678px;top:255px;width:12px;height:185px;border:1px solid #c0c0c0;background:#fff;"></div>
<div style="left:678.3px;top:522.7px;width:12px;height:11.5px;border:1px solid #c0c0c0;background:#fff;"></div>
<svg style="left:682px;top:527px;" width="8" height="6" viewBox="0 0 8 6"><path d="M0 1h8L4 5z" fill="#666"/></svg>
<div style="left:1px;top:537px;width:689px;height:26px;background:#e6e6e6;"></div>
<svg style="left:25px;top:545px;" width="5" height="8" viewBox="0 0 5 8"><path d="M4.5 0.5v7L0.5 4z" fill="#c6c6c6"/></svg>
<svg style="left:53px;top:545px;" width="5" height="8" viewBox="0 0 5 8"><path d="M0.5 0.5v7L4.5 4z" fill="#c6c6c6"/></svg>
<div style="left:97.2px;top:535.5px;width:63.2px;height:24px;background:#fff;"></div>
<div style="left:97.2px;top:535.5px;width:1px;height:24px;background:#c6c6c6;"></div>
<div style="left:160px;top:535.5px;width:1px;height:24px;background:#c6c6c6;"></div>
<div style="left:97.2px;top:557.6px;width:63.2px;height:2px;background:#217346;"></div>
<span style="left:108.8px;top:542.37px;font-size:13.5px;line-height:13.5px;color:#217346;font-weight:700;white-space:nowrap;font-family:'Liberation Sans', sans-serif;transform:scaleX(0.903);transform-origin:0 0;">Sheet1</span>
<svg style="left:193px;top:541px;" width="17" height="17" viewBox="0 0 17 17"><circle cx="8.5" cy="8.5" r="7.2" fill="none" stroke="#808080" stroke-width="1.6"/><path d="M8.5 4.3v8.4M4.3 8.5h8.4" stroke="#808080" stroke-width="1.7"/></svg>
<div style="left:280px;top:541.5px;width:360px;height:17px;background:#e6e6e6;"></div>
<div style="left:280px;top:542.5px;width:356px;height:12.5px;border:1px solid #c6c6c6;background:#fff;"></div>
<div style="left:639px;top:543px;width:22px;height:14px;background:#dadada;"></div>
<div style="left:662.3px;top:542.5px;width:12.5px;height:12.5px;border:1px solid #c6c6c6;background:#fff;"></div>
<svg style="left:667px;top:546px;" width="6" height="8" viewBox="0 0 6 8"><path d="M1 0v8l4-4z" fill="#666"/></svg>
<div style="left:1px;top:563px;width:689px;height:19px;background:#f3f3f3;"></div>
<div style="left:1px;top:563px;width:689px;height:1px;background:#d0d0d0;"></div>
<span style="left:6.7px;top:568.17px;font-size:11.5px;line-height:11.5px;color:#444;font-weight:400;white-space:nowrap;font-family:'Liberation Sans', sans-serif;transform:scaleX(0.902);transform-origin:0 0;">Ready</span>
<span style="left:203px;top:568.17px;font-size:11.5px;line-height:11.5px;color:#444;font-weight:400;white-space:nowrap;font-family:'Liberation Sans', sans-serif;transform:scaleX(0.951);transform-origin:0 0;">Average: 20</span>
<svg style="left:488px;top:565px;" width="17" height="16" viewBox="488 565 17 16"><path d="M490.5 567.8 H502.6 V579.2 H490.5 Z M490.5 574.4 H498.2 M494.2 567.8 V574.4 M498.2 567.8 V574.4" fill="none" stroke="#666" stroke-width="1.1"/></svg>
<div style="left:521px;top:573.5px;width:5px;height:1.5px;background:#555;"></div>
<div style="left:530.5px;top:573.8px;width:97.5px;height:1px;background:#999;"></div>
<div style="left:577.8px;top:568.6px;width:4.4px;height:9.4px;background:#555;"></div>
<svg style="left:632px;top:569px;" width="8" height="9" viewBox="0 0 8 9"><path d="M4 0.5v8M0.5 4.5h7" stroke="#555" stroke-width="1.5"/></svg>
<span style="left:651px;top:568.17px;font-size:11.5px;line-height:11.5px;color:#444;font-weight:400;white-space:nowrap;font-family:'Liberation Sans', sans-serif;transform:scaleX(0.884);transform-origin:0 0;">100%</span>
<div style="left:272.8px;top:113.7px;width:256.7px;height:52.7px;background:#fff;border:1px solid #c8c8c8;box-shadow:1px 2px 4px rgba(0,0,0,0.14);"></div>
<div style="left:276.6px;top:117.2px;width:61.1px;height:22px;border:1px solid #c6c6c6;background:#fff;"></div>
<div style="left:338.7px;top:117.2px;width:43.6px;height:22px;border:1px solid #c6c6c6;background:#fff;"></div>
<span style="left:279.9px;top:121.32px;font-size:12.5px;line-height:12.5px;color:#333;font-weight:400;white-space:nowrap;font-family:'Liberation Sans', sans-serif;transform:scaleX(0.931);transform-origin:0 0;">Calibri</span>
<svg style="left:329.6px;top:127.5px;" width="6" height="4" viewBox="0 0 6 4"><path d="M0 0h6l-3 3z" fill="#555"/></svg>
<span style="left:343px;top:121.32px;font-size:12.5px;line-height:12.5px;color:#333;font-weight:400;white-space:nowrap;font-family:'Liberation Sans', sans-serif;transform:scaleX(0.770);transform-origin:0 0;">11</span>
<svg style="left:375px;top:127.5px;" width="6" height="4" viewBox="0 0 6 4"><path d="M0 0h6l-3 3z" fill="#555"/></svg>
<span style="left:391.2px;top:123.77px;font-size:13.5px;line-height:13.5px;color:#666;font-weight:400;white-space:nowrap;font-family:'Liberation Sans', sans-serif;transform:scaleX(1.109);transform-origin:0 0;">A</span>
<svg style="left:398px;top:121px;" width="7" height="5" viewBox="398 121 7 5"><path d="M399.3 125 H403.7 L401.5 122.4 Z" fill="#3f7fc1"/></svg>
<span style="left:414px;top:126.31px;font-size:10.5px;line-height:10.5px;color:#666;font-weight:400;white-space:nowrap;font-family:'Liberation Sans', sans-serif;transform:scaleX(1.140);transform-origin:0 0;">A</span>
<svg style="left:420px;top:121px;" width="6" height="5" viewBox="420 121 6 5"><path d="M420.7 122.4 H425.2 L422.95 125 Z" fill="#3f7fc1"/></svg>
<svg style="left:430px;top:120px;" width="19" height="18" viewBox="430 120 19 18"><rect x="432.2" y="121.9" width="14.8" height="7.4" fill="#fff" stroke="#3f7fc1" stroke-width="1.3"/><circle cx="438.2" cy="125.5" r="2.1" fill="none" stroke="#3f7fc1" stroke-width="1.2"/><rect x="444" y="123.6" width="1.3" height="1.3" fill="#3f7fc1"/><ellipse cx="443" cy="129.3" rx="3.8" ry="1.4" fill="#e8b468"/><ellipse cx="443" cy="131.8" rx="3.8" ry="1.4" fill="#e8b468"/><ellipse cx="438.5" cy="132" rx="3.8" ry="1.4" fill="#e8b468"/><ellipse cx="438.5" cy="134.6" rx="3.8" ry="1.4" fill="#e8b468"/></svg>
<svg style="left:453px;top:127.5px;" width="6" height="4" viewBox="0 0 6 4"><path d="M0 0h6l-3 3z" fill="#555"/></svg>
<span style="left:466.8px;top:123.77px;font-size:13.5px;line-height:13.5px;color:#555;font-weight:400;white-space:nowrap;font-family:'Liberation Sans', sans-serif;transform:scaleX(1.057);transform-origin:0 0;">%</span>
<span style="left:489.8px;top:118.50px;font-size:15px;line-height:15px;color:#555;font-weight:700;white-space:nowrap;font-family:'Liberation Sans', sans-serif;transform:scaleX(1.246);transform-origin:0 0;">,</span>
<svg style="left:506px;top:120px;" width="19" height="18" viewBox="506 120 19 18"><path d="M508.5 121.8 H522.5 V135.5 H508.5 Z M508.5 125 H522.5 M508.5 132.2 H522.5 M515.5 121.8 V125 M515.5 132.2 V135.5" fill="none" stroke="#666" stroke-width="1.1"/><path d="M511.2 128.6 H519.8" stroke="#3f7fc1" stroke-width="1.1"/><path d="M510.6 128.6 L512.6 127 V130.2 Z M520.4 128.6 L518.4 127 V130.2 Z" fill="#3f7fc1"/></svg>
<span style="left:283px;top:147.47px;font-size:11.5px;line-height:11.5px;color:#555;font-weight:700;white-space:nowrap;font-family:'Liberation Sans', sans-serif;transform:scaleX(0.914);transform-origin:0 0;">B</span>
<span style="left:305px;top:146.62px;font-size:12.5px;line-height:12.5px;color:#555;font-weight:700;white-space:nowrap;font-family:'Liberation Serif', serif;font-style:italic;transform:scaleX(1.538);transform-origin:0 0;">I</span>
<svg style="left:322px;top:146px;" width="17" height="13" viewBox="322 146 17 13"><rect x="323.4" y="148.6" width="14.4" height="1.2" fill="#666"/><rect x="325.2" y="152.6" width="10.8" height="1.2" fill="#666"/><rect x="323.4" y="156.6" width="14.4" height="1.2" fill="#666"/></svg>
<svg style="left:343px;top:143px;" width="20" height="19" viewBox="343 143 20 19"><path d="M346.8 151.8 L351.5 147.1 L356.2 151.8 L351.5 156.5 Z" fill="#fff" stroke="#555" stroke-width="1.2"/><path d="M349.7 145.7 L352.3 148.5" stroke="#555" stroke-width="1.1"/><path d="M355.5 149.9 C357.6 150.9 358.1 153.1 357.3 154.8 C356.3 153.3 355.9 151.8 355.5 149.9 Z" fill="#3f7fc1"/><rect x="344.5" y="157.3" width="16.2" height="3.4" fill="#ffff00"/></svg>
<svg style="left:366px;top:151px;" width="6" height="4" viewBox="0 0 6 4"><path d="M0 0h6l-3 3z" fill="#555"/></svg>
<svg style="left:377px;top:143px;" width="18" height="19" viewBox="377 143 18 19"><path d="M381.6 156.3 L385.9 147.5 L390.2 156.3 M383.1 153.3 H388.7" fill="none" stroke="#555" stroke-width="1.5"/><rect x="378" y="157.3" width="15.8" height="3.4" fill="#e81010"/></svg>
<svg style="left:400px;top:151px;" width="6" height="4" viewBox="0 0 6 4"><path d="M0 0h6l-3 3z" fill="#555"/></svg>
<svg style="left:411px;top:145px;" width="17" height="16" viewBox="411 145 17 16"><path d="M412.5 146.7 H425.9 M412.5 152.2 H425.9 M412.5 146.7 V158 M419.2 146.7 V158 M425.9 146.7 V158" stroke="#8a8a8a" stroke-width="0.9" stroke-dasharray="1.1 1.1"/><path d="M412 158.4 H426.4" stroke="#555" stroke-width="1.3"/></svg>
<svg style="left:433.5px;top:151px;" width="6" height="4" viewBox="0 0 6 4"><path d="M0 0h6l-3 3z" fill="#555"/></svg>
<svg style="left:443px;top:144px;" width="10" height="9" viewBox="443 144 10 9"><path d="M445.6 148.8 H452" stroke="#3f7fc1" stroke-width="1.3"/><path d="M444.8 148.8 L447.8 146.3 V151.3 Z" fill="#3f7fc1"/></svg>
<span style="left:451.8px;top:144.70px;font-size:8.5px;line-height:8.5px;color:#555;font-weight:400;white-space:nowrap;font-family:'Liberation Sans', sans-serif;transform:scaleX(1.100);transform-origin:0 0;">.0</span>
<span style="left:447.4px;top:151.90px;font-size:8.5px;line-height:8.5px;color:#555;font-weight:400;white-space:nowrap;font-family:'Liberation Sans', sans-serif;transform:scaleX(1.031);transform-origin:0 0;">.00</span>
<span style="left:468px;top:144.70px;font-size:8.5px;line-height:8.5px;color:#555;font-weight:400;white-space:nowrap;font-family:'Liberation Sans', sans-serif;transform:scaleX(1.116);transform-origin:0 0;">.00</span>
<svg style="left:466px;top:152px;" width="10" height="9" viewBox="466 152 10 9"><path d="M467.2 156 H473.4" stroke="#3f7fc1" stroke-width="1.3"/><path d="M474.3 156 L471.3 153.5 V158.5 Z" fill="#3f7fc1"/></svg>
<span style="left:474px;top:151.90px;font-size:8.5px;line-height:8.5px;color:#555;font-weight:400;white-space:nowrap;font-family:'Liberation Sans', sans-serif;transform:scaleX(1.057);transform-origin:0 0;">.0</span>
<svg style="left:487px;top:143.5px;" width="20" height="18" viewBox="487 143.5 20 18"><path d="M499.50 150.50 L503.80 146.20" stroke="#666" stroke-width="3.4" stroke-linecap="round"/><path d="M494.70 148.50 L498.20 146.00 L503.20 151.00 L500.70 154.50 Z" fill="#6e6e6e"/><path d="M489.00 153.00 L494.70 148.50 L500.70 154.50 L496.20 159.10 Z" fill="#e8b468"/></svg>
<div style="left:272.6px;top:183.8px;width:201px;height:410px;background:#fff;border:1px solid #c6c6c6;box-shadow:0px 1px 4px rgba(0,0,0,0.13);"></div>
<div style="left:298.2px;top:233px;width:175.5px;height:21.4px;background:#e9e9e9;"></div>
<div style="left:273.2px;top:357.2px;width:195.3px;height:22.2px;background:#c6c6c6;border:3px solid #ff0000;"></div>
<div style="left:306px;top:308.3px;width:168px;height:1px;background:#e1e1e1;"></div>
<div style="left:306px;top:333.7px;width:168px;height:1px;background:#e1e1e1;"></div>
<div style="left:306px;top:430px;width:168px;height:1px;background:#e1e1e1;"></div>
<div style="left:306px;top:503.5px;width:168px;height:1px;background:#e1e1e1;"></div>
<div style="left:306px;top:529px;width:168px;height:1px;background:#e1e1e1;"></div>
<span style="left:305.8px;top:191.54px;font-size:12px;line-height:12px;color:#444;font-weight:400;white-space:nowrap;font-family:'Liberation Sans', sans-serif;transform:scaleX(0.963);transform-origin:0 0;">Cu<u style="text-underline-offset:1.5px">t</u></span>
<span style="left:305.8px;top:215.74px;font-size:12px;line-height:12px;color:#444;font-weight:400;white-space:nowrap;font-family:'Liberation Sans', sans-serif;transform:scaleX(0.938);transform-origin:0 0;"><u style="text-underline-offset:1.5px">C</u>opy</span>
<span style="left:305.8px;top:238.04px;font-size:12px;line-height:12px;color:#505050;font-weight:700;white-space:nowrap;font-family:'Liberation Sans', sans-serif;transform:scaleX(0.916);transform-origin:0 0;">Paste Options:</span>
<span style="left:305.8px;top:290.04px;font-size:12px;line-height:12px;color:#a6a6a6;font-weight:400;white-space:nowrap;font-family:'Liberation Sans', sans-serif;transform:scaleX(0.897);transform-origin:0 0;">Paste <u style="text-underline-offset:1.5px">S</u>pecial...</span>
<span style="left:305.8px;top:316.44px;font-size:12px;line-height:12px;color:#444;font-weight:400;white-space:nowrap;font-family:'Liberation Sans', sans-serif;transform:scaleX(0.966);transform-origin:0 0;">Smart <u style="text-underline-offset:1.5px">L</u>ookup</span>
<span style="left:305.8px;top:341.14px;font-size:12px;line-height:12px;color:#444;font-weight:400;white-space:nowrap;font-family:'Liberation Sans', sans-serif;transform:scaleX(0.922);transform-origin:0 0;">Translate</span>
<span style="left:305.8px;top:364.84px;font-size:12px;line-height:12px;color:#333;font-weight:400;white-space:nowrap;font-family:'Liberation Sans', sans-serif;transform:scaleX(0.942);transform-origin:0 0;"><u style="text-underline-offset:1.5px">I</u>nsert...</span>
<span style="left:305.8px;top:388.34px;font-size:12px;line-height:12px;color:#444;font-weight:400;white-space:nowrap;font-family:'Liberation Sans', sans-serif;transform:scaleX(0.931);transform-origin:0 0;"><u style="text-underline-offset:1.5px">D</u>elete...</span>
<span style="left:305.8px;top:411.74px;font-size:12px;line-height:12px;color:#444;font-weight:400;white-space:nowrap;font-family:'Liberation Sans', sans-serif;transform:scaleX(0.948);transform-origin:0 0;">Clear Co<u style="text-underline-offset:1.5px">n</u>tents</span>
<span style="left:305.8px;top:438.24px;font-size:12px;line-height:12px;color:#444;font-weight:400;white-space:nowrap;font-family:'Liberation Sans', sans-serif;transform:scaleX(0.974);transform-origin:0 0;"><u style="text-underline-offset:1.5px">Q</u>uick Analysis</span>
<span style="left:305.8px;top:461.14px;font-size:12px;line-height:12px;color:#444;font-weight:400;white-space:nowrap;font-family:'Liberation Sans', sans-serif;transform:scaleX(0.989);transform-origin:0 0;">Filt<u style="text-underline-offset:1.5px">e</u>r</span>
<span style="left:305.8px;top:484.84px;font-size:12px;line-height:12px;color:#444;font-weight:400;white-space:nowrap;font-family:'Liberation Sans', sans-serif;transform:scaleX(0.921);transform-origin:0 0;">S<u style="text-underline-offset:1.5px">o</u>rt</span>
<span style="left:305.8px;top:511.04px;font-size:12px;line-height:12px;color:#444;font-weight:400;white-space:nowrap;font-family:'Liberation Sans', sans-serif;transform:scaleX(0.993);transform-origin:0 0;">Insert Co<u style="text-underline-offset:1.5px">m</u>ment</span>
<span style="left:305.8px;top:536.64px;font-size:12px;line-height:12px;color:#444;font-weight:400;white-space:nowrap;font-family:'Liberation Sans', sans-serif;transform:scaleX(0.951);transform-origin:0 0;"><u style="text-underline-offset:1.5px">F</u>ormat Cells...</span>
<span style="left:305.8px;top:560.04px;font-size:12px;line-height:12px;color:#444;font-weight:400;white-space:nowrap;font-family:'Liberation Sans', sans-serif;transform:scaleX(0.975);transform-origin:0 0;">Pic<u style="text-underline-offset:1.5px">k</u> From Drop-down List...</span>
<svg style="left:461px;top:463px;" width="5" height="8" viewBox="0 0 5 8"><path d="M0.5 0.5v7L4.5 4z" fill="#555"/></svg>
<svg style="left:461px;top:486.5px;" width="5" height="8" viewBox="0 0 5 8"><path d="M0.5 0.5v7L4.5 4z" fill="#555"/></svg>
<svg style="left:278.2px;top:188.1px;" width="16.2" height="17.3" viewBox="278.2 188.1 16.2 17.3"><path d="M282.2 190.1 L289.2 198.9" stroke="#5a5a5a" stroke-width="1.5" stroke-linecap="round"/><path d="M290.4 190.1 L283.4 198.9" stroke="#5a5a5a" stroke-width="1.5" stroke-linecap="round"/><circle cx="282.2" cy="201.4" r="2.5" fill="none" stroke="#3f7fc1" stroke-width="1.05"/><circle cx="290.4" cy="201.4" r="2.5" fill="none" stroke="#3f7fc1" stroke-width="1.05"/></svg>
<svg style="left:277.4px;top:213.3px;" width="18" height="16" viewBox="277.4 213.3 18 16"><path d="M278.9 214.8 H282.9 L284.9 216.8 V224.8 H278.9 Z" fill="#fff" stroke="#666" stroke-width="1"/><path d="M282.9 214.8 V216.8 H284.9" fill="none" stroke="#666" stroke-width="0.8"/><rect x="280.4" y="217.3" width="2.6" height="0.9" fill="#3f7fc1"/><rect x="280.4" y="219.5" width="2.6" height="0.9" fill="#3f7fc1"/><rect x="280.4" y="221.70000000000002" width="2.6" height="0.9" fill="#3f7fc1"/><path d="M284.9 217.8 H291.29999999999995 L293.9 220.4 V227.8 H284.9 Z" fill="#fff" stroke="#666" stroke-width="1"/><path d="M291.29999999999995 217.8 V220.4 H293.9" fill="none" stroke="#666" stroke-width="0.8"/><rect x="286.7" y="220.9" width="5.2" height="0.9" fill="#3f7fc1"/><rect x="286.7" y="223.10000000000002" width="5.2" height="0.9" fill="#3f7fc1"/><rect x="286.7" y="225.3" width="5.2" height="0.9" fill="#3f7fc1"/></svg>
<svg style="left:277.5px;top:235.5px;" width="22.0" height="22.0" viewBox="277.5 235.5 22.0 22.0"><rect x="279.5" y="239.5" width="12.3" height="12.7" fill="#d9d6d9"/><rect x="282.7" y="237.8" width="5.9" height="3.3" fill="#bcbcbc"/><rect x="284.5" y="236.9" width="2.3" height="1.5" fill="#bcbcbc"/><path d="M285.9 244.5 H291.4 L293.9 247.0 V253.1 H285.9 Z" fill="#f4f1f4" stroke="#a9a9a9" stroke-width="1"/><path d="M291.4 244.5 V247.0 H293.9" fill="none" stroke="#a9a9a9" stroke-width="0.8"/></svg>
<svg style="left:302px;top:258.5px;" width="30.4" height="30.4" viewBox="302 258.5 30.4 30.4"><rect x="304" y="263.34" width="17.466" height="18.034" fill="#d9d6d9"/><rect x="308.544" y="260.926" width="8.378" height="4.686" fill="#bcbcbc"/><rect x="311.1" y="259.648" width="3.2659999999999996" height="2.13" fill="#bcbcbc"/><path d="M313.088 270.44 H320.898 L324.44800000000004 273.99 V282.652 H313.088 Z" fill="#f4f1f4" stroke="#a9a9a9" stroke-width="1"/><path d="M320.898 270.44 V273.99 H324.44800000000004" fill="none" stroke="#a9a9a9" stroke-width="0.8"/></svg>
<svg style="left:276px;top:311px;" width="20" height="20" viewBox="276 311 20 20"><circle cx="287.45" cy="319.8" r="5.7" fill="none" stroke="#3f7fc1" stroke-width="1.7"/><path d="M283.4 324.3 L279.8 328.2" stroke="#3f7fc1" stroke-width="2.4" stroke-linecap="round"/><rect x="286.7" y="316.6" width="1.5" height="1.5" fill="#333"/><rect x="286.7" y="319" width="1.5" height="4.3" fill="#333"/></svg>
<svg style="left:276px;top:433px;" width="20" height="20" viewBox="276 433 20 20"><path d="M279.9 437.7 H292.3 V449.9 H279.9 V446" fill="none" stroke="#666" stroke-width="1.3"/><rect x="284" y="437.1" width="8.9" height="2.2" fill="#666"/><path d="M282.3 435.8 L285.3 435.8 L283.6 440.3 L285.2 440.3 L278.4 446.8 L280.9 441.4 L279.2 441.4 Z" fill="#e8b060"/><rect x="284" y="441" width="4.3" height="1.8" fill="#d9453a"/><rect x="283.2" y="444" width="7.8" height="1.8" fill="#3f7fc1"/><rect x="283.2" y="447" width="5.9" height="1.6" fill="#3f9a5f"/></svg>
<svg style="left:276px;top:507px;" width="20" height="18" viewBox="276 507 20 18"><path d="M284.5 510.6 H292.4 V518.6 H286.2 L282.6 522.4 V518.6 H279.8 V515.6" fill="none" stroke="#666" stroke-width="1.1"/><path d="M281.2 508.9 V514.6 M278.3 511.75 H284.1" stroke="#3a9a5a" stroke-width="1.6"/></svg>
<svg style="left:276px;top:532px;" width="20" height="20" viewBox="276 532 20 20"><path d="M279.8 535 H292.4 V549.8 H279.8 Z" fill="#fff" stroke="#666" stroke-width="1.1"/><rect x="279.3" y="534.3" width="13.6" height="3.3" fill="#3f7fc1"/><circle cx="283.6" cy="540.9" r="1.1" fill="#666"/><circle cx="283.6" cy="545.8" r="1.1" fill="none" stroke="#777" stroke-width="0.7"/><rect x="285.9" y="540.5" width="4" height="0.9" fill="#888"/><rect x="285.9" y="545.4" width="4" height="0.9" fill="#888"/></svg>
<div style="left:0px;top:0px;width:690px;height:1px;background:#000;"></div>
<div style="left:0px;top:0px;width:1px;height:584px;background:#000;"></div>
<div style="left:0px;top:582px;width:690px;height:2px;background:#000;"></div>
</body></html>
